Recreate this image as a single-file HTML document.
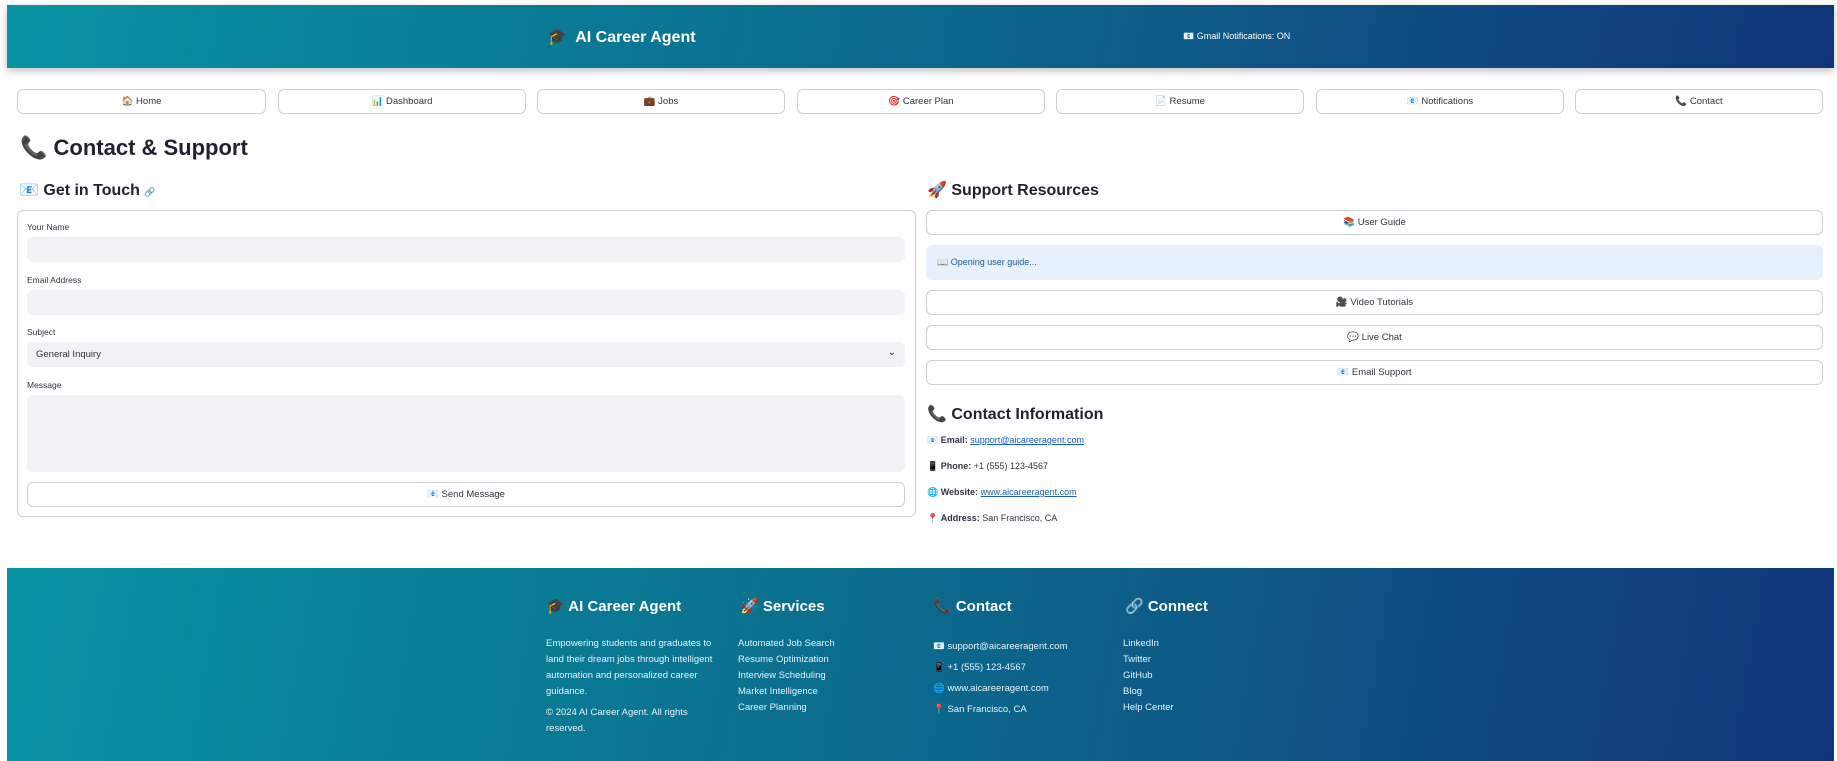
<!DOCTYPE html>
<html><head><meta charset="utf-8"><style>
*{box-sizing:border-box;margin:0;padding:0}
body{width:1837px;height:761px;overflow:hidden;background:#fff;font-family:"Liberation Sans","Noto Sans CJK SC",sans-serif;color:#31333f;position:relative}
.abs{position:absolute}
.grad{background:linear-gradient(100deg,#0893a3 0%,#0b6e8e 45%,#11357a 100%)}
.hdr{left:7px;top:5px;width:1827px;height:63px;box-shadow:0 3px 8px rgba(0,0,0,.25)}
.btn{position:absolute;border:1px solid #cfd0d4;border-radius:6px;background:#fff;font-size:9.5px;display:flex;align-items:center;justify-content:center;color:#31333f}
h1{position:absolute;font-size:22px;font-weight:bold;color:#1f2230}
h3{position:absolute;font-size:16px;font-weight:bold;color:#1f2230}
.lbl{position:absolute;left:27px;font-size:8.5px;color:#31333f}
.inp{position:absolute;left:27px;width:878px;background:#f0f2f6;border-radius:6px}
.ci{position:absolute;left:927px;font-size:9px;color:#31333f}
.ci a{color:#1a5fb4}
.ft{color:#e8f2f6;font-size:9.5px;line-height:16px}
.fh{position:absolute;top:597px;font-size:15px;font-weight:bold;color:#fff}
</style></head><body>
<div class="abs grad hdr"></div>
<div class="abs" style="left:547px;top:27px;font-size:16px;font-weight:bold;color:#fff">🎓&nbsp; AI Career Agent</div>
<div class="abs" style="left:1183px;top:31px;font-size:9px;color:#fff">📧 Gmail Notifications: ON</div>

<div class="btn" style="left:17px;top:89px;width:249px;height:25px">🏠 Home</div>
<div class="btn" style="left:278px;top:89px;width:248px;height:25px">📊 Dashboard</div>
<div class="btn" style="left:537px;top:89px;width:248px;height:25px">💼 Jobs</div>
<div class="btn" style="left:797px;top:89px;width:248px;height:25px">🎯 Career Plan</div>
<div class="btn" style="left:1056px;top:89px;width:248px;height:25px">📄 Resume</div>
<div class="btn" style="left:1316px;top:89px;width:248px;height:25px">📧 Notifications</div>
<div class="btn" style="left:1575px;top:89px;width:248px;height:25px">📞 Contact</div>

<h1 style="left:20px;top:135px">📞 Contact &amp; Support</h1>
<h3 style="left:19px;top:180px">📧 Get in Touch <span style="font-size:9px;color:#999">🔗</span></h3>
<div class="abs" style="left:17px;top:210px;width:899px;height:307px;border:1px solid #cfd0d4;border-radius:6px"></div>
<div class="lbl" style="top:222px">Your Name</div>
<div class="inp" style="top:237px;height:25px"></div>
<div class="lbl" style="top:275px">Email Address</div>
<div class="inp" style="top:290px;height:25px"></div>
<div class="lbl" style="top:327px">Subject</div>
<div class="inp" style="top:342px;height:25px;font-size:9.5px;padding:7px 9px">General Inquiry<span style="position:absolute;right:9px;top:5px;font-size:10px">⌄</span></div>
<div class="lbl" style="top:380px">Message</div>
<div class="inp" style="top:395px;height:77px"></div>
<div class="btn" style="left:27px;top:482px;width:878px;height:25px">📧 Send Message</div>

<h3 style="left:927px;top:180px">🚀 Support Resources</h3>
<div class="btn" style="left:926px;top:210px;width:897px;height:25px">📚 User Guide</div>
<div class="abs" style="left:926px;top:245px;width:897px;height:35px;background:#e7f1fd;border-radius:6px;font-size:9px;color:#1d5c8f;padding:12px 11px">📖 Opening user guide...</div>
<div class="btn" style="left:926px;top:290px;width:897px;height:25px">🎥 Video Tutorials</div>
<div class="btn" style="left:926px;top:325px;width:897px;height:25px">💬 Live Chat</div>
<div class="btn" style="left:926px;top:360px;width:897px;height:25px">📧 Email Support</div>
<h3 style="left:927px;top:404px">📞 Contact Information</h3>
<div class="ci" style="top:435px">📧 <b>Email:</b> <a><u>support@aicareeragent.com</u></a></div>
<div class="ci" style="top:461px">📱 <b>Phone:</b> +1 (555) 123-4567</div>
<div class="ci" style="top:487px">🌐 <b>Website:</b> <a><u>www.aicareeragent.com</u></a></div>
<div class="ci" style="top:513px">📍 <b>Address:</b> San Francisco, CA</div>

<div class="abs grad" style="left:7px;top:568px;width:1827px;height:193px"></div>
<div class="fh" style="left:546px">🎓 AI Career Agent</div>
<div class="fh" style="left:740px">🚀 Services</div>
<div class="fh" style="left:933px">📞 Contact</div>
<div class="fh" style="left:1125px">🔗 Connect</div>
<div class="abs ft" style="left:546px;top:636px;width:175px">Empowering students and graduates to land their dream jobs through intelligent automation and personalized career guidance.<div style="margin-top:5px">© 2024 AI Career Agent. All rights reserved.</div></div>
<div class="abs ft" style="left:738px;top:636px">Automated Job Search<br>Resume Optimization<br>Interview Scheduling<br>Market Intelligence<br>Career Planning</div>
<div class="abs ft" style="left:933px;top:636px;line-height:21px">📧 support@aicareeragent.com<br>📱 +1 (555) 123-4567<br>🌐 www.aicareeragent.com<br>📍 San Francisco, CA</div>
<div class="abs ft" style="left:1123px;top:636px">LinkedIn<br>Twitter<br>GitHub<br>Blog<br>Help Center</div>
</body></html>
